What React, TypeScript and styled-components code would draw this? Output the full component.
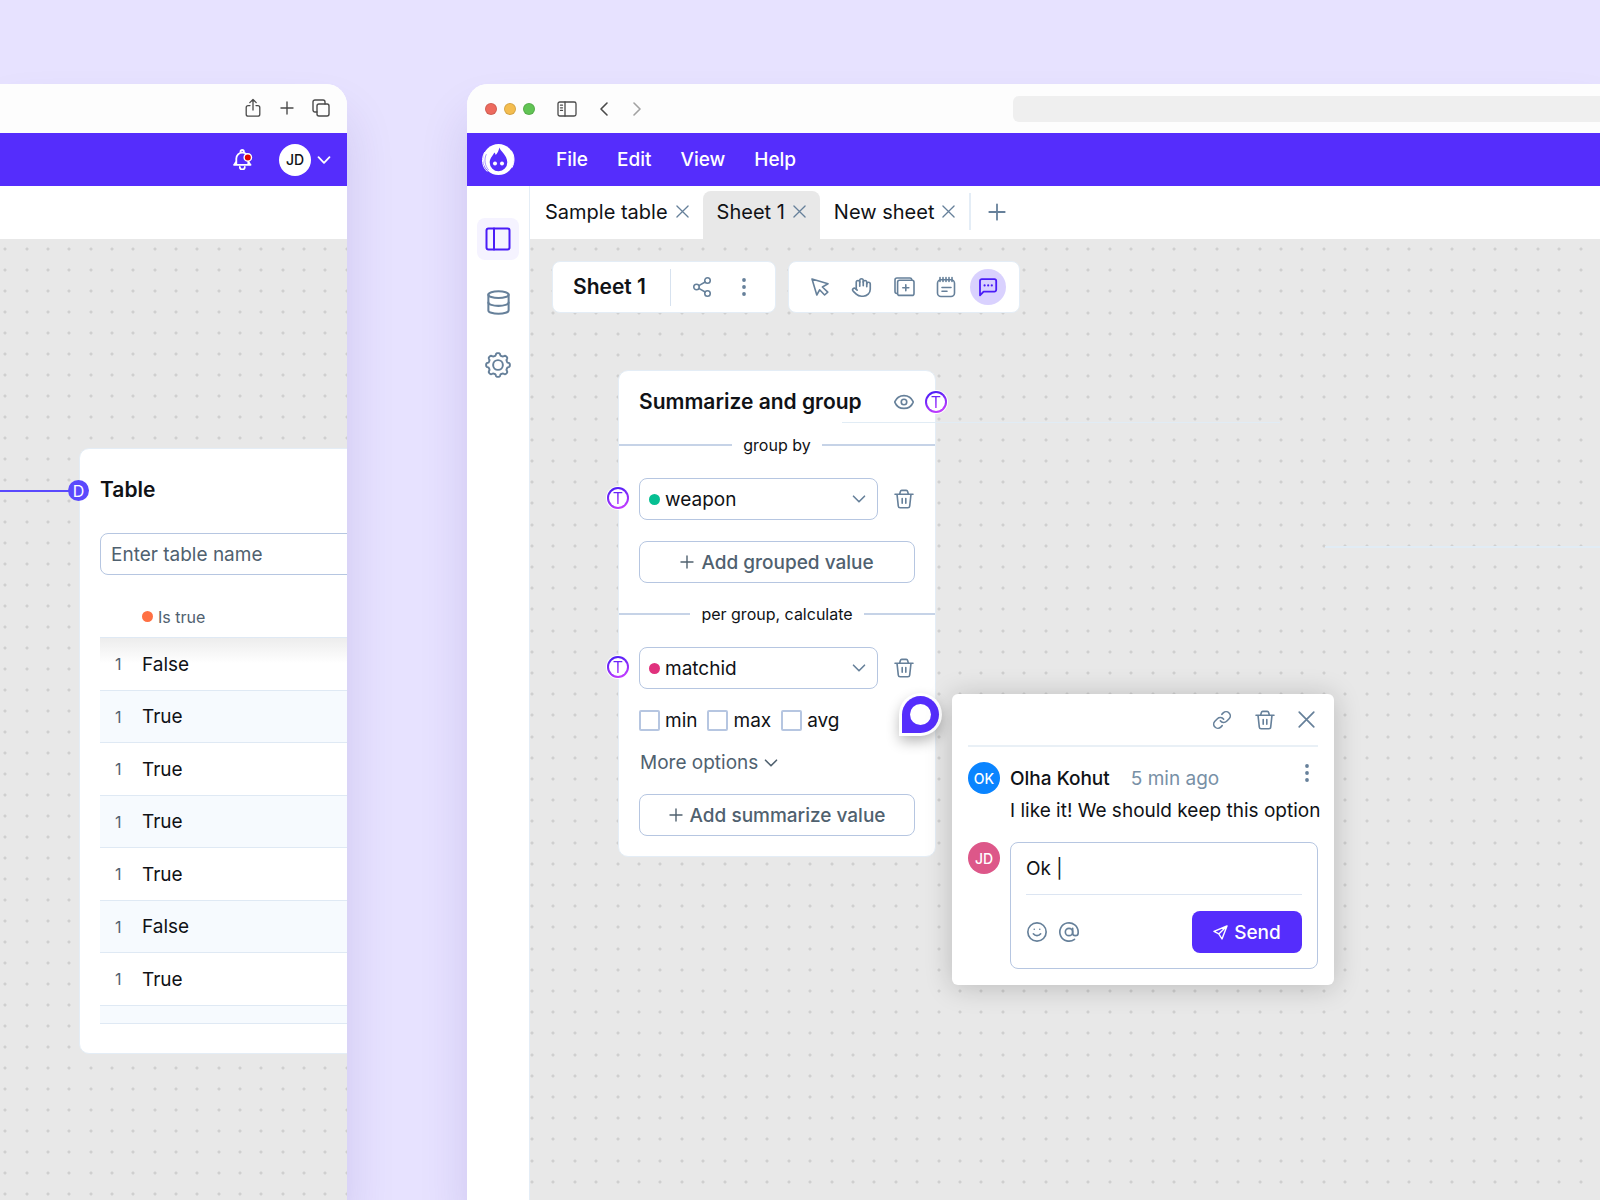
import React from "react";
import styled, { createGlobalStyle, css } from "styled-components";
import { AtSign, Database, Eye, Hand, Link as LinkIcon, Share2, Smile } from "lucide-react";

const color = {
  page: "#e7e2ff",
  brand: "#552dfc",
  ink: "#101216",
  muted: "#50616f",
  icon: "#66809a",
  line: "#e4edf6",
  field: "#b6c6e1",
  canvas: "#e8e8e8",
  stripe: "#f6fafe",
};

/* Builds one tile of the canvas dot grid. */
const dotGrid = (xs: number[], ys: number[], width: number, height: number) => {
  const layers = ys.flatMap((y) =>
    xs.map((x) => `radial-gradient(circle at ${x + 3}px ${y + 3}px, #cfcfcf 1px, transparent 2px)`)
  );
  return css`
    background-color: ${color.canvas};
    background-image: ${layers.join(", ")};
    background-size: ${width}px ${height}px;
  `;
};

const GlobalStyle = createGlobalStyle`
  * { box-sizing: border-box; }
  body { margin: 0; background: ${color.page}; color: ${color.ink}; font-family: Inter, "Liberation Sans", sans-serif; }
  button, input, select { font: inherit; color: inherit; }
`;

/* ---------- windows ---------- */

const Stage = styled.div`
  display: flex;
  gap: 120px;
  min-height: 100vh;
  padding-top: 84px;
  overflow: hidden;
  background: ${color.page};
`;

const Window = styled.section<{ $side: "left" | "right" }>`
  display: flex;
  flex-direction: column;
  flex: ${(p) => (p.$side === "left" ? "0 0 347px" : "1 1 0")};
  min-width: 0;
  overflow: hidden;
  background: #fff;
  border-radius: ${(p) => (p.$side === "left" ? "0 21px 0 0" : "21px 0 0 0")};
  box-shadow: 0 32px 48px rgba(62, 40, 150, 0.15);
`;

const TitleBar = styled.div`
  display: flex;
  align-items: center;
  height: 49px;
  background: #fdfdfd;
  color: #4a4a4a;
`;

const TitleActions = styled.div`
  display: flex;
  align-items: center;
  gap: 18px;
  margin-left: auto;
  padding: 0 17px 2px 0;
`;

const WindowControls = styled.div`
  display: flex;
  align-items: center;
  flex: 0 0 546px;
  padding-left: 18px;
`;

const Lights = styled.div`
  display: flex;
  gap: 7px;
  margin-right: 22px;
`;

const Light = styled.button<{ $fill: string }>`
  width: 12px;
  height: 12px;
  padding: 0;
  border: 1px solid rgba(0, 0, 0, 0.12);
  border-radius: 50%;
  background: ${(p) => p.$fill};
`;

const NavButtons = styled.div`
  display: flex;
  gap: 17px;
  margin-left: 19px;
`;

const AddressField = styled.input`
  flex: 1;
  min-width: 0;
  height: 26px;
  border: 0;
  border-radius: 6px 0 0 6px;
  background: #efefef;
`;

const PlainButton = styled.button<{ $dim?: boolean }>`
  display: inline-flex;
  align-items: center;
  justify-content: center;
  padding: 0;
  border: 0;
  background: none;
  opacity: ${(p) => (p.$dim ? 0.5 : 1)};
`;

const AppBar = styled.header`
  display: flex;
  align-items: center;
  height: 53px;
  padding: 0 16px 0 14px;
  background: ${color.brand};
  color: #fff;
`;

const Menu = styled.nav`
  display: flex;
  gap: 29px;
  margin-left: 41px;
`;

const MenuItem = styled.button`
  padding: 0;
  border: 0;
  background: none;
  color: #fff;
  font-size: 19px;
  font-weight: 500;
  line-height: 24px;
`;

const Account = styled.div`
  display: flex;
  align-items: center;
  gap: 6px;
  margin-left: auto;
`;

const BellSlot = styled.div`
  display: flex;
  margin-right: 20px;
`;

const Avatar = styled.span<{ $bg: string; $fg: string }>`
  display: flex;
  align-items: center;
  justify-content: center;
  flex: none;
  width: 32px;
  height: 32px;
  border-radius: 50%;
  background: ${(p) => p.$bg};
  color: ${(p) => p.$fg};
  font-size: 14px;
  font-weight: 500;
`;

const SubBar = styled.div`
  height: 53px;
  background: #fff;
`;

/* ---------- canvases ---------- */

const PreviewCanvas = styled.main`
  position: relative;
  flex: 1;
  overflow: hidden;
  ${dotGrid([0, 21, 43], [0], 64, 21)}
  background-position: 45px 7px;
`;

const SheetCanvas = styled.main`
  position: relative;
  flex: 1;
  padding: 22px;
  overflow: hidden;
  ${dotGrid([0, 21, 43, 64, 86], [0, 21, 42, 64, 85], 107, 106)}
  background-position: -1px 7px;
`;

const Workspace = styled.div`
  display: flex;
  flex: 1;
`;

const Content = styled.div`
  display: flex;
  flex-direction: column;
  flex: 1;
  min-width: 0;
`;

const Sidebar = styled.aside`
  display: flex;
  flex-direction: column;
  align-items: center;
  gap: 21px;
  flex: 0 0 63px;
  padding-top: 32px;
  border-right: 1px solid ${color.line};
`;

const SideButton = styled.button<{ $active?: boolean }>`
  display: flex;
  align-items: center;
  justify-content: center;
  width: 42px;
  height: 42px;
  padding: 0;
  border: 0;
  border-radius: 8px;
  background: ${(p) => (p.$active ? "#f5f3ff" : "none")};
  color: ${(p) => (p.$active ? "#4a1cf7" : color.icon)};
`;

/* ---------- tabs ---------- */

const TabBar = styled.div`
  display: flex;
  align-items: flex-end;
  height: 53px;
  padding-left: 1px;
`;

const Tab = styled.div<{ $active?: boolean }>`
  display: flex;
  align-items: center;
  gap: 8px;
  height: 48px;
  padding: 0 14px 7px;
  border-radius: 8px 8px 0 0;
  background: ${(p) => (p.$active ? color.canvas : "none")};
  color: ${color.icon};
`;

const TabLabel = styled.button`
  padding: 0;
  border: 0;
  background: none;
  color: ${color.ink};
  font-size: 20px;
  line-height: 24px;
  white-space: nowrap;
`;

const NewTab = styled.div`
  display: flex;
  align-items: center;
  align-self: flex-start;
  height: 37px;
  margin-top: 7px;
  padding-left: 17px;
  border-left: 2px solid ${color.line};
  color: ${color.icon};
`;

/* ---------- toolbar ---------- */

const Toolbar = styled.div`
  display: flex;
  gap: 12px;
`;

const ToolGroup = styled.div`
  display: flex;
  align-items: center;
  gap: 6px;
  height: 52px;
  padding: 0 13px;
  border: 1px solid ${color.line};
  border-radius: 8px;
  background: #fff;
`;

const SheetName = styled.h1`
  display: flex;
  align-items: center;
  height: 37px;
  margin: 0 7px 0 0;
  padding: 0 24px 0 7px;
  border-right: 1px solid #d7e2ef;
  font-size: 21px;
  font-weight: 600;
  line-height: 26px;
  white-space: nowrap;
`;

const ToolButton = styled.button<{ $active?: boolean }>`
  display: flex;
  align-items: center;
  justify-content: center;
  width: 36px;
  height: 36px;
  padding: 0;
  border: 0;
  border-radius: 50%;
  background: ${(p) => (p.$active ? "#d9d1fe" : "none")};
  color: ${(p) => (p.$active ? "#4a1cf7" : color.icon)};
`;

/* ---------- nodes ---------- */

const Node = styled.article<{ $x: number; $y: number; $w: number }>`
  position: absolute;
  left: ${(p) => p.$x}px;
  top: ${(p) => p.$y}px;
  width: ${(p) => p.$w}px;
  padding-bottom: 20px;
  border: 1px solid ${color.line};
  border-radius: 10px;
  background: #fff;
`;

const NodeHeader = styled.div`
  position: relative;
  display: flex;
  align-items: center;
  justify-content: space-between;
  height: 62px;
  padding: 0 20px;
  color: ${color.icon};
`;

const NodeTitle = styled.h2`
  margin: 0;
  color: ${color.ink};
  font-size: 21px;
  font-weight: 600;
  line-height: 26px;
  white-space: nowrap;
`;

const Divider = styled.div`
  display: flex;
  align-items: center;
  gap: 11px;
  height: 24px;
  font-size: 16px;
  line-height: 24px;

  &::before,
  &::after {
    content: "";
    flex: 1;
    height: 2px;
    background: #c6d3e7;
  }
`;

const NodeSection = styled.div`
  display: flex;
  flex-direction: column;
  gap: 21px;
  padding: 21px 20px 0;

  & + ${Divider} {
    margin-top: 19px;
  }
`;

const FieldRow = styled.div`
  position: relative;
  display: flex;
  align-items: center;
  justify-content: space-between;
  padding-right: 1px;
  color: ${color.icon};
`;

const SelectBox = styled.label`
  display: grid;
  align-items: center;
  flex: 0 0 239px;
  height: 42px;

  & > * {
    grid-area: 1 / 1;
  }
`;

const Dot = styled.span<{ $fill: string }>`
  width: 11px;
  height: 11px;
  border-radius: 50%;
  background: ${(p) => p.$fill};
`;

const SelectDot = styled(Dot)`
  z-index: 1;
  margin-left: 10px;
`;

const SelectArrow = styled.span`
  display: flex;
  z-index: 1;
  justify-self: end;
  margin-right: 12px;
  pointer-events: none;
`;

const Select = styled.select`
  width: 100%;
  height: 42px;
  padding: 0 25px;
  border: 1px solid ${color.field};
  border-radius: 8px;
  background: #fff;
  color: ${color.ink};
  font-size: 19px;
  appearance: none;
`;

const OutlineButton = styled.button`
  display: flex;
  align-items: center;
  justify-content: center;
  gap: 7px;
  height: 42px;
  padding: 0;
  border: 1px solid ${color.field};
  border-radius: 8px;
  background: #fff;
  color: ${color.muted};
  font-size: 19px;
  font-weight: 500;
  white-space: nowrap;
`;

const Checks = styled.div`
  display: flex;
  gap: 10px;
`;

const CheckLabel = styled.label`
  display: flex;
  align-items: center;
  gap: 5px;
  height: 21px;
  font-size: 19px;
`;

const Check = styled.input`
  width: 21px;
  height: 21px;
  margin: 0;
  border: 2px solid ${color.field};
  border-radius: 2px;
  background: #fff;
  appearance: none;
`;

const MoreButton = styled.button`
  display: flex;
  align-items: center;
  align-self: flex-start;
  gap: 6px;
  height: 21px;
  padding: 0 1px;
  border: 0;
  background: none;
  color: ${color.muted};
  font-size: 19px;
`;

const Port = styled.span<{ $side: "in" | "out" }>`
  position: absolute;
  top: ${(p) => (p.$side === "in" ? 9 : 20)}px;
  ${(p) => (p.$side === "in" ? "left: -32px;" : "right: -12px;")}
  display: flex;
  align-items: center;
  justify-content: center;
  width: 22px;
  height: 22px;
  border: 2px solid transparent;
  border-radius: 50%;
  background: linear-gradient(#fff, #fff) padding-box,
    linear-gradient(160deg, #4a1cf7 10%, #c63dff 90%) border-box;
  box-shadow: 0 0 0 1px #fff;
`;

const PortLetter = styled.span`
  background: linear-gradient(160deg, #4a1cf7, #c63dff);
  background-clip: text;
  color: transparent;
  font-size: 16px;
  line-height: 20px;
`;

const DataPort = styled.span`
  position: absolute;
  left: -12px;
  top: 31px;
  display: flex;
  align-items: center;
  justify-content: center;
  width: 21px;
  height: 21px;
  border-radius: 50%;
  background: #5a49fd;
  color: #fff;
  font-size: 16px;
`;

const Wire = styled.div`
  position: absolute;
  left: 0;
  top: 251px;
  width: 70px;
  height: 2px;
  background: #5a49fd;
`;

const Guide = styled.div<{ $x: number; $y: number; $w?: number }>`
  position: absolute;
  left: ${(p) => p.$x}px;
  top: ${(p) => p.$y}px;
  ${(p) => (p.$w ? `width: ${p.$w}px;` : "right: 0;")}
  height: ${(p) => (p.$w ? 1 : 2)}px;
  background: #e1ecf5;
`;

/* ---------- table node ---------- */

const TableHeader = styled.div`
  position: relative;
  padding: 28px 20px 30px;
`;

const NameInput = styled.input`
  display: block;
  width: calc(100% - 40px);
  height: 42px;
  margin: 0 20px 21px;
  padding: 0 10px;
  border: 1px solid ${color.field};
  border-radius: 8px;
  background: #fff;
  font-size: 19px;

  &::placeholder {
    color: ${color.muted};
    opacity: 1;
  }
`;

const DataTable = styled.table`
  width: calc(100% - 40px);
  margin: 0 20px 9px;
  border-spacing: 0;
  text-align: left;
`;

const HeadCell = styled.th`
  height: 41px;
  padding: 0;
  color: ${color.muted};
  font-size: 16px;
  font-weight: 400;
`;

const HeadLabel = styled.span`
  display: flex;
  align-items: center;
  gap: 5px;
`;

const Cell = styled.td<{ $index?: boolean }>`
  width: ${(p) => (p.$index ? "42px" : "auto")};
  height: 53px;
  padding: ${(p) => (p.$index ? "0 0 0 15px" : "0")};
  border-top: 1px solid #dfe9f4;
  color: ${(p) => (p.$index ? color.muted : color.ink)};
  font-size: ${(p) => (p.$index ? 16 : 19)}px;
`;

const Row = styled.tr`
  &:first-child {
    background: linear-gradient(#ececec, #fff 50%);
  }

  &:nth-child(even) {
    background: ${color.stripe};
  }

  &:nth-child(even) ${Cell} {
    height: 52px;
  }

  &:last-child ${Cell} {
    height: 19px;
    border-bottom: 1px solid #dfe9f4;
  }
`;

/* ---------- comment thread ---------- */

const CommentPin = styled.button`
  position: absolute;
  left: 372px;
  top: 457px;
  display: flex;
  align-items: center;
  justify-content: center;
  width: 37px;
  height: 37px;
  padding: 0;
  border: 0;
  border-radius: 50% 50% 50% 0;
  background: ${color.brand};
  box-shadow: 0 0 0 3px #fff, 0 6px 14px 2px rgba(0, 0, 0, 0.3);

  &::before {
    content: "";
    width: 21px;
    height: 21px;
    border-radius: 50%;
    background: #fff;
  }
`;

const Thread = styled.section`
  position: absolute;
  left: 422px;
  top: 455px;
  width: 382px;
  padding: 16px;
  border-radius: 6px;
  background: #fff;
  box-shadow: 0 2px 28px rgba(0, 0, 0, 0.2);
`;

const ThreadActions = styled.div`
  display: flex;
  align-items: center;
  justify-content: flex-end;
  gap: 23px;
  height: 37px;
  margin-bottom: 15px;
  padding: 0 3px 16px 0;
  border-bottom: 2px solid #e9f0f6;
  color: ${color.icon};
`;

const CommentRow = styled.div`
  display: flex;
  gap: 10px;
`;

const CommentBody = styled.div`
  flex: 1;
  min-width: 0;
  padding-top: 1px;
`;

const CommentMeta = styled.div`
  display: flex;
  gap: 21px;
  font-size: 19px;
  line-height: 32px;
  white-space: nowrap;
`;

const Author = styled.strong`
  font-weight: 500;
`;

const Time = styled.time`
  color: #7890a6;
`;

const CommentMenu = styled(PlainButton)`
  margin: 0 8px 0 auto;
  align-self: flex-start;
  height: 20px;
  color: ${color.icon};
`;

const CommentText = styled.p`
  margin: 0 0 15px;
  font-size: 19px;
  line-height: 32px;
  white-space: nowrap;
`;

const Reply = styled.form`
  flex: 1;
  min-width: 0;
  padding: 0 15px 15px;
  border: 1px solid ${color.field};
  border-radius: 8px;
`;

const ReplyInput = styled.input`
  display: block;
  width: 100%;
  height: 52px;
  padding: 0;
  border: 0;
  border-bottom: 1px solid #dce5f2;
  background: none;
  font-size: 19px;
  outline: none;
`;

const ReplyBar = styled.div`
  display: flex;
  align-items: center;
  gap: 10px;
  padding-top: 16px;
  color: ${color.icon};
`;

const SendButton = styled.button`
  display: flex;
  align-items: center;
  justify-content: center;
  gap: 6px;
  width: 110px;
  height: 42px;
  margin-left: auto;
  padding: 0;
  border: 0;
  border-radius: 8px;
  background: ${color.brand};
  color: #fff;
  font-size: 19px;
  font-weight: 500;
`;

/* ---------- icons ---------- */

type IconProps = { size?: number; width?: number; box?: string; stroke?: number; children?: React.ReactNode };

const Svg = styled.svg`
  display: block;
  flex: none;
  fill: none;
  stroke: currentColor;
  stroke-linecap: round;
  stroke-linejoin: round;
`;

const Glyph = ({ size = 20, width, box = "0 0 20 20", stroke = 1.6, children }: IconProps) => (
  <Svg width={width ?? size} height={size} viewBox={box} strokeWidth={stroke} aria-hidden="true">
    {children}
  </Svg>
);

const Trash = () => (
  <Glyph>
    <path d="M1 5.2h18M5.6 5.2l.7-2.6a1.6 1.6 0 0 1 1.5-1.2h4.400a1.600 1.600 0 0 1 1.500 1.200l.7 2.600M3 5.200l1.300 12a1.800 1.800 0 0 0 1.800 1.600h7.800a1.800 1.800 0 0 0 1.800-1.600l1.300-12M8.200 9.500v4.800M11.800 9.500v4.800" />
  </Glyph>
);
const Cross = ({ size = 13 }: { size?: number }) => (
  <Glyph size={size} box="0 0 14 14" stroke={1.4}>
    <path d="M1 1l12 12M13 1L1 13" />
  </Glyph>
);
const Plus = ({ size = 14 }: { size?: number }) => (
  <Glyph size={size} box="0 0 14 14" stroke={1.4}>
    <path d="M7 1v12M1 7h12" />
  </Glyph>
);
const Down = ({ stroke = 1.6 }: { stroke?: number }) => (
  <Glyph size={14} box="0 0 14 14" stroke={stroke}>
    <path d="M1.5 4.200L7 9.800l5.500-5.600" />
  </Glyph>
);
const Dots = () => (
  <Glyph size={20} width={6} box="0 0 6 20">
    <g fill="currentColor" stroke="none">
      <circle cx="3" cy="3" r="1.9" />
      <circle cx="3" cy="10" r="1.9" />
      <circle cx="3" cy="17" r="1.9" />
    </g>
  </Glyph>
);
const PanelIcon = () => (
  <Glyph size={26} box="0 0 26 26" stroke={2}>
    <rect x="1.5" y="2.5" width="23" height="21" rx="2" />
    <path d="M9 2.5v21" />
  </Glyph>
);

const gearPath = (() => {
  const points: string[] = [];
  for (let i = 0; i < 160; i++) {
    const a = (i / 160) * Math.PI * 2;
    const r = 9.9 + 1.1 * Math.tanh(2 * Math.cos(8 * a));
    points.push(`${(12 + r * Math.sin(a)).toFixed(2)} ${(12 - r * Math.cos(a)).toFixed(2)}`);
  }
  return `M${points.join("L")}Z`;
})();
const Gear = () => (
  <Glyph size={26} box="0 0 24 24" stroke={1.8}>
    <path d={gearPath} />
    <circle cx="12" cy="12" r="4.5" />
  </Glyph>
);
const Cursor = () => (
  <Glyph>
    <path d="M2 2l16 4.800-5.600 3.200 5.400 5.200-3.200 2.800-5-5.200L6.800 18z" />
  </Glyph>
);
const AddLayer = () => (
  <Glyph size={22} box="0 0 22 22">
    <path d="M4 17.500a2 2 0 0 1-2-2V4a2 2 0 0 1 2-2h13a2 2 0 0 1 1.800 1.500" />
    <rect x="4.600" y="4.200" width="16.400" height="15.200" rx="2" />
    <path d="M12.800 8.800v6M9.800 11.800h6" />
  </Glyph>
);
const Note = () => (
  <Glyph size={22} box="0 0 22 22">
    <rect x="2.500" y="3.800" width="17" height="16.700" rx="3.500" />
    <path d="M5 1.500v4M8 1.500v4M11 1.500v4M14 1.500v4M17 1.500v4M7 11.500h9M7 15.300h5" />
  </Glyph>
);
const Chat = () => (
  <Glyph stroke={1.8}>
    <path d="M2 18.400V4a1.800 1.800 0 0 1 1.800-1.800h12.600A1.800 1.800 0 0 1 18.200 4v8.800a1.800 1.800 0 0 1-1.800 1.800H5.600z" />
    <g fill="currentColor" stroke="none">
      <circle cx="6.600" cy="8.400" r="1.100" />
      <circle cx="10.200" cy="8.400" r="1.100" />
      <circle cx="13.800" cy="8.400" r="1.100" />
    </g>
  </Glyph>
);
const Plane = () => (
  <Glyph size={15} box="0 0 15 15" stroke={1.4}>
    <path d="M14 1L1 6.400l4.800 2.500L9 14zM14 1L5.800 8.900" />
  </Glyph>
);
const ShareUp = () => (
  <Glyph size={20} width={18} box="0 0 18 20" stroke={1.3}>
    <path d="M6 7.600H4.200a2 2 0 0 0-2 2v6.600a2 2 0 0 0 2 2h9.600a2 2 0 0 0 2-2V9.600a2 2 0 0 0-2-2H12M9 12V1.800M5.800 4.600L9 1.500l3.200 3.100" />
  </Glyph>
);
const Copies = () => (
  <Glyph size={18} box="0 0 18 18" stroke={1.4}>
    <rect x="5" y="5" width="12" height="12" rx="2" />
    <path d="M5 13H3a2 2 0 0 1-2-2V3a2 2 0 0 1 2-2h8a2 2 0 0 1 2 2v2" />
  </Glyph>
);
const Bell = () => (
  <Glyph size={21} box="0 0 20 21" stroke={1.8}>
    <path d="M3.800 15.500V9.600a6 6 0 0 1 12 0v5.900M1.500 15.800h16.600M3.800 12.500l-1.800 3M15.800 12.500l1.800 3M8 3.400V2.700a1.500 1.500 0 0 1 3.400 0v.7M7.300 18a2.500 2.500 0 0 0 5 0" />
    <circle cx="15.300" cy="8.400" r="3.700" fill="#e10600" stroke="#fff" strokeWidth="1.400" />
  </Glyph>
);
const BrowserPanel = () => (
  <Glyph size={16} width={20} box="0 0 20 16" stroke={1.3}>
    <rect x="1" y="1" width="18" height="14" rx="1.800" />
    <path d="M8 1v14M3.500 4.200h2M3.500 6.800h2M3.500 9.400h2" />
  </Glyph>
);
const Logo = () => (
  <Svg width="34" height="34" viewBox="0 0 34 34" role="img" aria-label="Home">
    <circle cx="17.500" cy="16.500" r="15.500" fill="#fff" stroke="none" />
    <path d="M3.500 9.500C.2 15.500.8 23.500 6 28.300M30.500 8c3.300 5 3.300 11.500.5 16.500" stroke="#fff" strokeWidth="1" />
    <path d="M5.200 11.500C3 16 3.600 22.500 7.400 26.800" stroke={color.brand} strokeWidth=".5" />
    <path
      d="M18.300 4.500c.3 2.600 8 7.600 8 14.800a8.800 8.800 0 0 1-17.600.2c0-4.200 2.800-6.400 4.700-10 .8 1 1.200 1.700 1.300 2.600 1.800-2 3.100-4.600 3.600-7.600z"
      fill={color.brand}
      stroke="none"
    />
    <circle cx="14" cy="20.500" r="2" fill="#fff" stroke="none" />
    <circle cx="21" cy="20.500" r="2" fill="#fff" stroke="none" />
  </Svg>
);
const Arrow = ({ back }: { back?: boolean }) => (
  <Glyph size={16} box="0 0 16 16">
    <path d={back ? "M11 2L5 8l6 6" : "M5 2l6 6-6 6"} />
  </Glyph>
);

/* ---------- page ---------- */

const rows = ["False", "True", "True", "True", "True", "False", "True"];
const tabs = ["Sample table", "Sheet 1", "New sheet"];

const TypePort = ({ side }: { side: "in" | "out" }) => (
  <Port $side={side}>
    <PortLetter>T</PortLetter>
  </Port>
);

const ValueRow = ({ label, value, fill }: { label: string; value: string; fill: string }) => (
  <FieldRow>
    <TypePort side="in" />
    <SelectBox>
      <Select aria-label={label} defaultValue={value}>
        <option>{value}</option>
      </Select>
      <SelectDot $fill={fill} />
      <SelectArrow>
        <Down />
      </SelectArrow>
    </SelectBox>
    <PlainButton aria-label={`Remove ${value}`}>
      <Trash />
    </PlainButton>
  </FieldRow>
);

const TableWindow = () => (
  <Window $side="left">
    <TitleBar>
      <TitleActions>
        <PlainButton aria-label="Share"><ShareUp /></PlainButton>
        <PlainButton aria-label="New window"><Plus /></PlainButton>
        <PlainButton aria-label="Show windows"><Copies /></PlainButton>
      </TitleActions>
    </TitleBar>
    <AppBar>
      <Account>
        <BellSlot>
          <PlainButton aria-label="Notifications"><Bell /></PlainButton>
        </BellSlot>
        <Avatar $bg="#fff" $fg={color.ink}>JD</Avatar>
        <PlainButton aria-label="Account menu"><Down stroke={1.8} /></PlainButton>
      </Account>
    </AppBar>
    <SubBar />
    <PreviewCanvas>
      <Wire />
      <Node $x={79} $y={209} $w={422}>
        <TableHeader>
          <DataPort>D</DataPort>
          <NodeTitle>Table</NodeTitle>
        </TableHeader>
        <NameInput aria-label="Table name" placeholder="Enter table name" />
        <DataTable>
          <thead>
            <tr>
              <HeadCell aria-label="Row" />
              <HeadCell>
                <HeadLabel>
                  <Dot $fill="#ff7043" />
                  Is true
                </HeadLabel>
              </HeadCell>
            </tr>
          </thead>
          <tbody>
            {rows.map((value, i) => (
              <Row key={i}>
                <Cell $index>1</Cell>
                <Cell>{value}</Cell>
              </Row>
            ))}
            <Row>
              <Cell $index />
              <Cell />
            </Row>
          </tbody>
        </DataTable>
      </Node>
    </PreviewCanvas>
  </Window>
);

const CommentThread = () => (
  <Thread aria-label="Comments">
    <ThreadActions>
      <PlainButton aria-label="Copy link"><LinkIcon size={20} strokeWidth={1.9} /></PlainButton>
      <PlainButton aria-label="Delete thread"><Trash /></PlainButton>
      <PlainButton aria-label="Close"><Cross size={17} /></PlainButton>
    </ThreadActions>
    <CommentRow>
      <Avatar $bg="#0a84ff" $fg="#fff">OK</Avatar>
      <CommentBody>
        <CommentMeta>
          <Author>Olha Kohut</Author>
          <Time>5 min ago</Time>
          <CommentMenu aria-label="Comment options"><Dots /></CommentMenu>
        </CommentMeta>
        <CommentText>I like it! We should keep this option</CommentText>
      </CommentBody>
    </CommentRow>
    <CommentRow>
      <Avatar $bg="#dd5789" $fg="#fff">JD</Avatar>
      <Reply onSubmit={(e) => e.preventDefault()}>
        <ReplyInput aria-label="Reply" defaultValue="Ok |" />
        <ReplyBar>
          <PlainButton type="button" aria-label="Emoji"><Smile size={22} strokeWidth={1.8} /></PlainButton>
          <PlainButton type="button" aria-label="Mention"><AtSign size={22} strokeWidth={1.8} /></PlainButton>
          <SendButton>
            <Plane />
            Send
          </SendButton>
        </ReplyBar>
      </Reply>
    </CommentRow>
  </Thread>
);

const SheetWindow = () => (
  <Window $side="right">
    <TitleBar>
      <WindowControls>
        <Lights>
          <Light $fill="#ed6a5e" aria-label="Close window" />
          <Light $fill="#f4bd4f" aria-label="Minimise window" />
          <Light $fill="#61c454" aria-label="Maximise window" />
        </Lights>
        <PlainButton aria-label="Browser sidebar"><BrowserPanel /></PlainButton>
        <NavButtons>
          <PlainButton aria-label="Back"><Arrow back /></PlainButton>
          <PlainButton $dim aria-label="Forward"><Arrow /></PlainButton>
        </NavButtons>
      </WindowControls>
      <AddressField aria-label="Address" />
    </TitleBar>
    <AppBar>
      <Logo />
      <Menu>
        {["File", "Edit", "View", "Help"].map((item) => (
          <MenuItem key={item}>{item}</MenuItem>
        ))}
      </Menu>
    </AppBar>
    <Workspace>
      <Sidebar>
        <SideButton $active aria-label="Sheets"><PanelIcon /></SideButton>
        <SideButton aria-label="Data"><Database size={27} strokeWidth={1.8} /></SideButton>
        <SideButton aria-label="Settings"><Gear /></SideButton>
      </Sidebar>
      <Content>
        <TabBar>
          {tabs.map((name) => (
            <Tab key={name} $active={name === "Sheet 1"}>
              <TabLabel>{name}</TabLabel>
              <PlainButton aria-label={`Close ${name}`}><Cross /></PlainButton>
            </Tab>
          ))}
          <NewTab>
            <PlainButton aria-label="New tab"><Plus size={18} /></PlainButton>
          </NewTab>
        </TabBar>
        <SheetCanvas>
          <Toolbar>
            <ToolGroup>
              <SheetName>Sheet 1</SheetName>
              <ToolButton aria-label="Share sheet"><Share2 size={22} strokeWidth={1.7} /></ToolButton>
              <ToolButton aria-label="Sheet options"><Dots /></ToolButton>
            </ToolGroup>
            <ToolGroup>
              <ToolButton aria-label="Select"><Cursor /></ToolButton>
              <ToolButton aria-label="Pan"><Hand size={21} strokeWidth={1.9} /></ToolButton>
              <ToolButton aria-label="Add node"><AddLayer /></ToolButton>
              <ToolButton aria-label="Add note"><Note /></ToolButton>
              <ToolButton $active aria-label="Comment"><Chat /></ToolButton>
            </ToolGroup>
          </Toolbar>
          <Node $x={88} $y={131} $w={318}>
            <NodeHeader>
              <NodeTitle>Summarize and group</NodeTitle>
              <PlainButton aria-label="Preview"><Eye size={22} strokeWidth={1.8} /></PlainButton>
              <TypePort side="out" />
            </NodeHeader>
            <Divider>group by</Divider>
            <NodeSection>
              <ValueRow label="Group by" value="weapon" fill="#06bf92" />
              <OutlineButton>
                <Plus />
                Add grouped value
              </OutlineButton>
            </NodeSection>
            <Divider>per group, calculate</Divider>
            <NodeSection>
              <ValueRow label="Calculate" value="matchid" fill="#e0317d" />
              <Checks>
                {["min", "max", "avg"].map((name) => (
                  <CheckLabel key={name}>
                    <Check type="checkbox" />
                    {name}
                  </CheckLabel>
                ))}
              </Checks>
              <MoreButton>
                More options
                <Down />
              </MoreButton>
              <OutlineButton>
                <Plus />
                Add summarize value
              </OutlineButton>
            </NodeSection>
          </Node>
          <Guide $x={312} $y={183} $w={438} />
          <Guide $x={795} $y={307} />
          <CommentPin aria-label="Open comment" />
          <CommentThread />
        </SheetCanvas>
      </Content>
    </Workspace>
  </Window>
);

export default function App() {
  return (
    <>
      <GlobalStyle />
      <Stage>
        <TableWindow />
        <SheetWindow />
      </Stage>
    </>
  );
}
